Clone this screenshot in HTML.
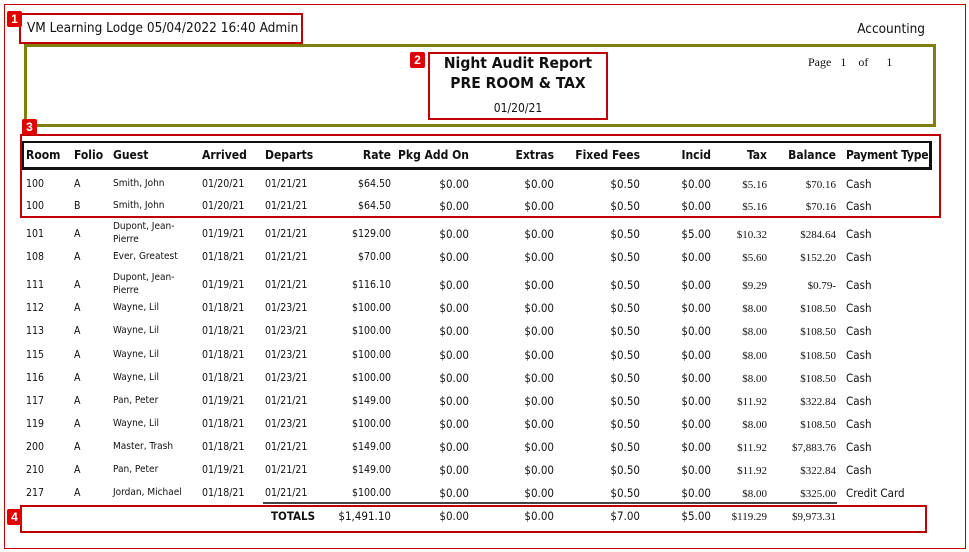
<!DOCTYPE html>
<html><head><meta charset="utf-8"><style>
body{margin:0;width:969px;height:552px;background:#fff;position:relative;overflow:hidden;font-family:"DejaVu Sans Condensed","DejaVu Sans","Liberation Sans",sans-serif;color:#111}
.a{position:absolute}
.r{position:absolute;left:0;width:969px;height:0}
.r span{position:absolute;top:-7px;line-height:14px;font-size:10.5px;white-space:nowrap}
.c1{left:26px}.c2{left:74px}.c3{left:113px;font-size:10px!important}.c4{left:202px}.c5{left:265px}
.c6{right:578px}.c7{right:500px;font-size:11.5px!important}.c8{right:415px;font-size:11.5px!important}.c9{right:329px;font-size:11.5px!important}.c10{right:258px;font-size:11.5px!important}
.c11{right:202px;font-family:"Liberation Serif",serif;top:-6px!important;font-size:11px!important}.c12{right:133px;font-family:"Liberation Serif",serif;top:-6px!important;font-size:11px!important}.c13{left:846px;font-size:11.5px!important}
.g2{top:-14px!important;line-height:13px!important}
.h span{font-weight:bold;font-size:12px;top:-8px;line-height:16px}
.red{border:2px solid #c00000}
.badge{position:absolute;width:15px;height:16px;background:#e00000;color:#fff;font:bold 12px "Liberation Sans",sans-serif;text-align:center;line-height:16px;border-radius:2px}
</style></head><body>
<div class="a" style="left:4px;top:4px;width:960px;height:543px;border:1px solid #c00000"></div>
<div class="a red" style="left:19px;top:13px;width:280px;height:27px"></div>
<div class="badge" style="left:7px;top:11px">1</div>
<div class="a" style="left:27px;top:20px;font-size:13.5px">VM Learning Lodge 05/04/2022 16:40 Admin</div>
<div class="a" style="right:44px;top:21px;font-size:13.5px">Accounting</div>
<div class="a" style="left:24px;top:44px;width:906px;height:77px;border:3px solid #7f7f10"></div>
<div class="a red" style="left:428px;top:52px;width:176px;height:64px"></div>
<div class="badge" style="left:410px;top:52px">2</div>
<div class="a" style="left:428px;width:180px;top:53px;text-align:center;font-weight:bold;font-size:15.5px;line-height:20px">Night Audit Report<br>PRE ROOM &amp; TAX</div>
<div class="a" style="left:428px;width:180px;top:101px;text-align:center;font-size:12px">01/20/21</div>
<div class="a" style="left:808px;top:55px;font-family:'Liberation Serif',serif;font-size:12px">Page&nbsp;&nbsp;&nbsp;1&nbsp;&nbsp;&nbsp;&nbsp;of&nbsp;&nbsp;&nbsp;&nbsp;&nbsp;&nbsp;1</div>
<div class="a red" style="left:20px;top:134px;width:917px;height:80px"></div>
<div class="badge" style="left:22px;top:119px">3</div>
<div class="a" style="left:22px;top:141px;width:905px;height:24px;border:2px solid #111;border-right-width:3px;border-bottom-width:3px"></div>
<div class="r h" style="top:155px"><span class="c1">Room</span><span class="c2">Folio</span><span style="left:113px">Guest</span><span class="c4">Arrived</span><span class="c5">Departs</span><span class="c6">Rate</span><span style="right:500px">Pkg Add On</span><span style="right:415px">Extras</span><span style="right:329px">Fixed Fees</span><span style="right:258px">Incid</span><span style="right:202px">Tax</span><span style="right:133px">Balance</span><span style="left:846px;letter-spacing:-0.2px">Payment Type</span></div>

<div class="r" style="top:184px"><span class="c1">100</span><span class="c2">A</span><span class="c3">Smith, John</span><span class="c4">01/20/21</span><span class="c5">01/21/21</span><span class="c6">$64.50</span><span class="c7">$0.00</span><span class="c8">$0.00</span><span class="c9">$0.50</span><span class="c10">$0.00</span><span class="c11">$5.16</span><span class="c12">$70.16</span><span class="c13">Cash</span></div>
<div class="r" style="top:206px"><span class="c1">100</span><span class="c2">B</span><span class="c3">Smith, John</span><span class="c4">01/20/21</span><span class="c5">01/21/21</span><span class="c6">$64.50</span><span class="c7">$0.00</span><span class="c8">$0.00</span><span class="c9">$0.50</span><span class="c10">$0.00</span><span class="c11">$5.16</span><span class="c12">$70.16</span><span class="c13">Cash</span></div>
<div class="r" style="top:234px"><span class="c1">101</span><span class="c2">A</span><span class="c3 g2">Dupont, Jean-<br>Pierre</span><span class="c4">01/19/21</span><span class="c5">01/21/21</span><span class="c6">$129.00</span><span class="c7">$0.00</span><span class="c8">$0.00</span><span class="c9">$0.50</span><span class="c10">$5.00</span><span class="c11">$10.32</span><span class="c12">$284.64</span><span class="c13">Cash</span></div>
<div class="r" style="top:257px"><span class="c1">108</span><span class="c2">A</span><span class="c3">Ever, Greatest</span><span class="c4">01/18/21</span><span class="c5">01/21/21</span><span class="c6">$70.00</span><span class="c7">$0.00</span><span class="c8">$0.00</span><span class="c9">$0.50</span><span class="c10">$0.00</span><span class="c11">$5.60</span><span class="c12">$152.20</span><span class="c13">Cash</span></div>
<div class="r" style="top:285px"><span class="c1">111</span><span class="c2">A</span><span class="c3 g2">Dupont, Jean-<br>Pierre</span><span class="c4">01/19/21</span><span class="c5">01/21/21</span><span class="c6">$116.10</span><span class="c7">$0.00</span><span class="c8">$0.00</span><span class="c9">$0.50</span><span class="c10">$0.00</span><span class="c11">$9.29</span><span class="c12">$0.79-</span><span class="c13">Cash</span></div>
<div class="r" style="top:308px"><span class="c1">112</span><span class="c2">A</span><span class="c3">Wayne, Lil</span><span class="c4">01/18/21</span><span class="c5">01/23/21</span><span class="c6">$100.00</span><span class="c7">$0.00</span><span class="c8">$0.00</span><span class="c9">$0.50</span><span class="c10">$0.00</span><span class="c11">$8.00</span><span class="c12">$108.50</span><span class="c13">Cash</span></div>
<div class="r" style="top:331px"><span class="c1">113</span><span class="c2">A</span><span class="c3">Wayne, Lil</span><span class="c4">01/18/21</span><span class="c5">01/23/21</span><span class="c6">$100.00</span><span class="c7">$0.00</span><span class="c8">$0.00</span><span class="c9">$0.50</span><span class="c10">$0.00</span><span class="c11">$8.00</span><span class="c12">$108.50</span><span class="c13">Cash</span></div>
<div class="r" style="top:355px"><span class="c1">115</span><span class="c2">A</span><span class="c3">Wayne, Lil</span><span class="c4">01/18/21</span><span class="c5">01/23/21</span><span class="c6">$100.00</span><span class="c7">$0.00</span><span class="c8">$0.00</span><span class="c9">$0.50</span><span class="c10">$0.00</span><span class="c11">$8.00</span><span class="c12">$108.50</span><span class="c13">Cash</span></div>
<div class="r" style="top:378px"><span class="c1">116</span><span class="c2">A</span><span class="c3">Wayne, Lil</span><span class="c4">01/18/21</span><span class="c5">01/23/21</span><span class="c6">$100.00</span><span class="c7">$0.00</span><span class="c8">$0.00</span><span class="c9">$0.50</span><span class="c10">$0.00</span><span class="c11">$8.00</span><span class="c12">$108.50</span><span class="c13">Cash</span></div>
<div class="r" style="top:401px"><span class="c1">117</span><span class="c2">A</span><span class="c3">Pan, Peter</span><span class="c4">01/19/21</span><span class="c5">01/21/21</span><span class="c6">$149.00</span><span class="c7">$0.00</span><span class="c8">$0.00</span><span class="c9">$0.50</span><span class="c10">$0.00</span><span class="c11">$11.92</span><span class="c12">$322.84</span><span class="c13">Cash</span></div>
<div class="r" style="top:424px"><span class="c1">119</span><span class="c2">A</span><span class="c3">Wayne, Lil</span><span class="c4">01/18/21</span><span class="c5">01/23/21</span><span class="c6">$100.00</span><span class="c7">$0.00</span><span class="c8">$0.00</span><span class="c9">$0.50</span><span class="c10">$0.00</span><span class="c11">$8.00</span><span class="c12">$108.50</span><span class="c13">Cash</span></div>
<div class="r" style="top:447px"><span class="c1">200</span><span class="c2">A</span><span class="c3">Master, Trash</span><span class="c4">01/18/21</span><span class="c5">01/21/21</span><span class="c6">$149.00</span><span class="c7">$0.00</span><span class="c8">$0.00</span><span class="c9">$0.50</span><span class="c10">$0.00</span><span class="c11">$11.92</span><span class="c12">$7,883.76</span><span class="c13">Cash</span></div>
<div class="r" style="top:470px"><span class="c1">210</span><span class="c2">A</span><span class="c3">Pan, Peter</span><span class="c4">01/19/21</span><span class="c5">01/21/21</span><span class="c6">$149.00</span><span class="c7">$0.00</span><span class="c8">$0.00</span><span class="c9">$0.50</span><span class="c10">$0.00</span><span class="c11">$11.92</span><span class="c12">$322.84</span><span class="c13">Cash</span></div>
<div class="r" style="top:493px"><span class="c1">217</span><span class="c2">A</span><span class="c3">Jordan, Michael</span><span class="c4">01/18/21</span><span class="c5">01/21/21</span><span class="c6">$100.00</span><span class="c7">$0.00</span><span class="c8">$0.00</span><span class="c9">$0.50</span><span class="c10">$0.00</span><span class="c11">$8.00</span><span class="c12">$325.00</span><span class="c13">Credit Card</span></div>
<div class="a" style="left:263px;top:502px;width:574px;height:2px;background:#444"></div>
<div class="a red" style="left:20px;top:505px;width:903px;height:24px"></div>
<div class="badge" style="left:7px;top:509px">4</div>
<div class="r" style="top:516px"><span style="left:271px;font-weight:bold;font-size:11.5px">TOTALS</span><span class="c6" style="font-size:11.5px">$1,491.10</span><span class="c7">$0.00</span><span class="c8">$0.00</span><span class="c9">$7.00</span><span class="c10">$5.00</span><span class="c11">$119.29</span><span class="c12">$9,973.31</span></div>
</body></html>
